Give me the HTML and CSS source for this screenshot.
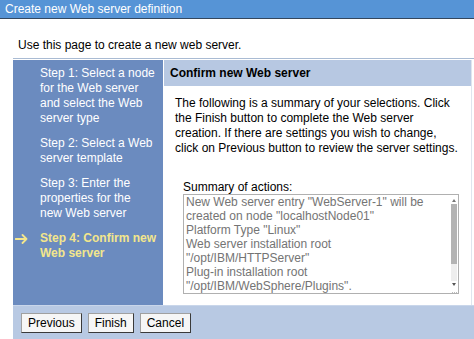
FILE: index.html
```html
<!DOCTYPE html>
<html>
<head>
<meta charset="utf-8">
<link rel="stylesheet" href="styles.css">
</head>
<body>
<div class="titlebar">Create new Web server definition</div>
<div class="intro">Use this page to create a new web server.</div>
<div class="rule"></div>
<div class="wizard">
  <nav class="steps">
    <div class="step"><span class="mark"></span><span class="label">Step 1: Select a node<br>for the Web server<br>and select the Web<br>server type</span></div>
    <div class="step"><span class="mark"></span><span class="label">Step 2: Select a Web<br>server template</span></div>
    <div class="step"><span class="mark"></span><span class="label">Step 3: Enter the<br>properties for the<br>new Web server</span></div>
    <div class="step current"><span class="mark"><svg class="arrow-icon" width="13" height="10" viewBox="0 0 13 10"><path d="M0.5 5H11.5M7.5 1L11.5 5L7.5 9" fill="none" stroke="#f3e68c" stroke-width="1.8" stroke-linecap="round" stroke-linejoin="round"/></svg></span><span class="label">Step 4: Confirm new<br>Web server</span></div>
  </nav>
  <section class="main">
    <div class="main-head">Confirm new Web server</div>
    <div class="main-body">
      <p class="desc">The following is a summary of your selections. Click<br>the Finish button to complete the Web server<br>creation. If there are settings you wish to change,<br>click on Previous button to review the server settings.</p>
      <div class="summary">
        <div class="summary-label">Summary of actions:</div>
        <div class="textbox">
          <div class="textbox-text">New Web server entry "WebServer-1" will be<br>created on node "localhostNode01"<br>Platform Type "Linux"<br>Web server installation root<br>"/opt/IBM/HTTPServer"<br>Plug-in installation root<br>"/opt/IBM/WebSphere/Plugins".</div>
          <div class="scrollbar">
            <div class="arrow up"></div>
            <div class="track"><div class="thumb"></div></div>
            <div class="arrow down"></div>
            <div class="grip"></div>
          </div>
        </div>
      </div>
    </div>
  </section>
  <div class="buttons">
    <button class="btn">Previous</button>
    <button class="btn">Finish</button>
    <button class="btn">Cancel</button>
  </div>
</div>
</body>
</html>
```
FILE: styles.css
```css
html, body {
  margin: 0;
  padding: 0;
}
body {
  width: 474px;
  height: 339px;
  overflow: hidden;
  background: #ffffff;
  font-family: "Liberation Sans", Arial, sans-serif;
  font-size: 12px;
  color: #000;
}
.titlebar {
  height: 18px;
  line-height: 18px;
  padding-left: 5px;
  background: #5694d6;
  color: #ffffff;
  border-bottom: 1px solid #34475e;
  white-space: nowrap;
}
.intro {
  margin: 19px 0 0 18px;
  line-height: 15px;
  height: 15px;
  white-space: nowrap;
}
.rule {
  margin: 5px 0 0 13px;
  height: 1px;
  background: #a9bbd3;
}
.wizard {
  margin: 1px 0 0 13px;
  display: grid;
  grid-template-columns: 150px 1fr;
  grid-template-rows: 245px 34px;
}
.steps {
  background: #6b8bbf;
  color: #ffffff;
  padding: 6px 0 0 2px;
  line-height: 15px;
}
.step {
  display: flex;
  margin-bottom: 10px;
  white-space: nowrap;
}
.mark {
  width: 25px;
  flex: none;
  display: flex;
  align-items: flex-start;
  padding-top: 3px;
  box-sizing: border-box;
}
.arrow-icon {
  display: block;
}
.step.current {
  color: #f3e68c;
  font-weight: bold;
}
.main {
  background: #ffffff;
  margin-right: 2px;
  border-right: 1px solid #dfe5ee;
  overflow: hidden;
}
.main-head {
  height: 26px;
  line-height: 26px;
  margin-left: 1px;
  padding-left: 6px;
  background: #b7c8e2;
  font-weight: bold;
}
.main-body {
  padding: 10px 0 0 12px;
}
.desc {
  margin: 0;
  line-height: 15px;
  white-space: nowrap;
}
.summary {
  margin: 24px 0 0 8px;
}
.summary-label {
  line-height: 15px;
  height: 14px;
}
.textbox {
  width: 274px;
  height: 98px;
  border: 1px solid #b0b0b0;
  display: flex;
  overflow: hidden;
}
.textbox-text {
  flex: 1;
  padding: 0 0 0 2px;
  line-height: 14px;
  color: #747474;
  white-space: nowrap;
}
.scrollbar {
  width: 6px;
  margin: 2px 1px 0 0;
  display: flex;
  flex-direction: column;
  align-items: center;
}
.arrow {
  width: 0;
  height: 0;
  border-left: 2px solid transparent;
  border-right: 2px solid transparent;
  margin: 2px 0;
}
.arrow.up {
  border-bottom: 3px solid #777;
}
.arrow.down {
  border-top: 3px solid #555;
}
.track {
  width: 6px;
  height: 83px;
  background: #eeeeee;
}
.thumb {
  width: 6px;
  height: 60px;
  background: #b3b3b3;
}
.grip {
  width: 5px;
  height: 3px;
  margin-top: 1px;
  border-bottom: 1px dotted #bbb;
}
.buttons {
  grid-column: 1 / 3;
  background: #b8c9e3;
  border-top: 1px solid #c9d6ea;
  display: flex;
  align-items: flex-start;
  gap: 6px;
  padding: 7px 0 0 8px;
}
.btn {
  font-family: "Liberation Sans", Arial, sans-serif;
  font-size: 12px;
  height: 20px;
  padding: 0 6px;
  margin: 0;
  background: #f6f6f6;
  color: #000;
  border: 1px solid #a0a0a0;
  border-right-color: #3a3a3a;
  border-bottom-color: #3a3a3a;
  border-radius: 0;
  line-height: 18px;
}
```
